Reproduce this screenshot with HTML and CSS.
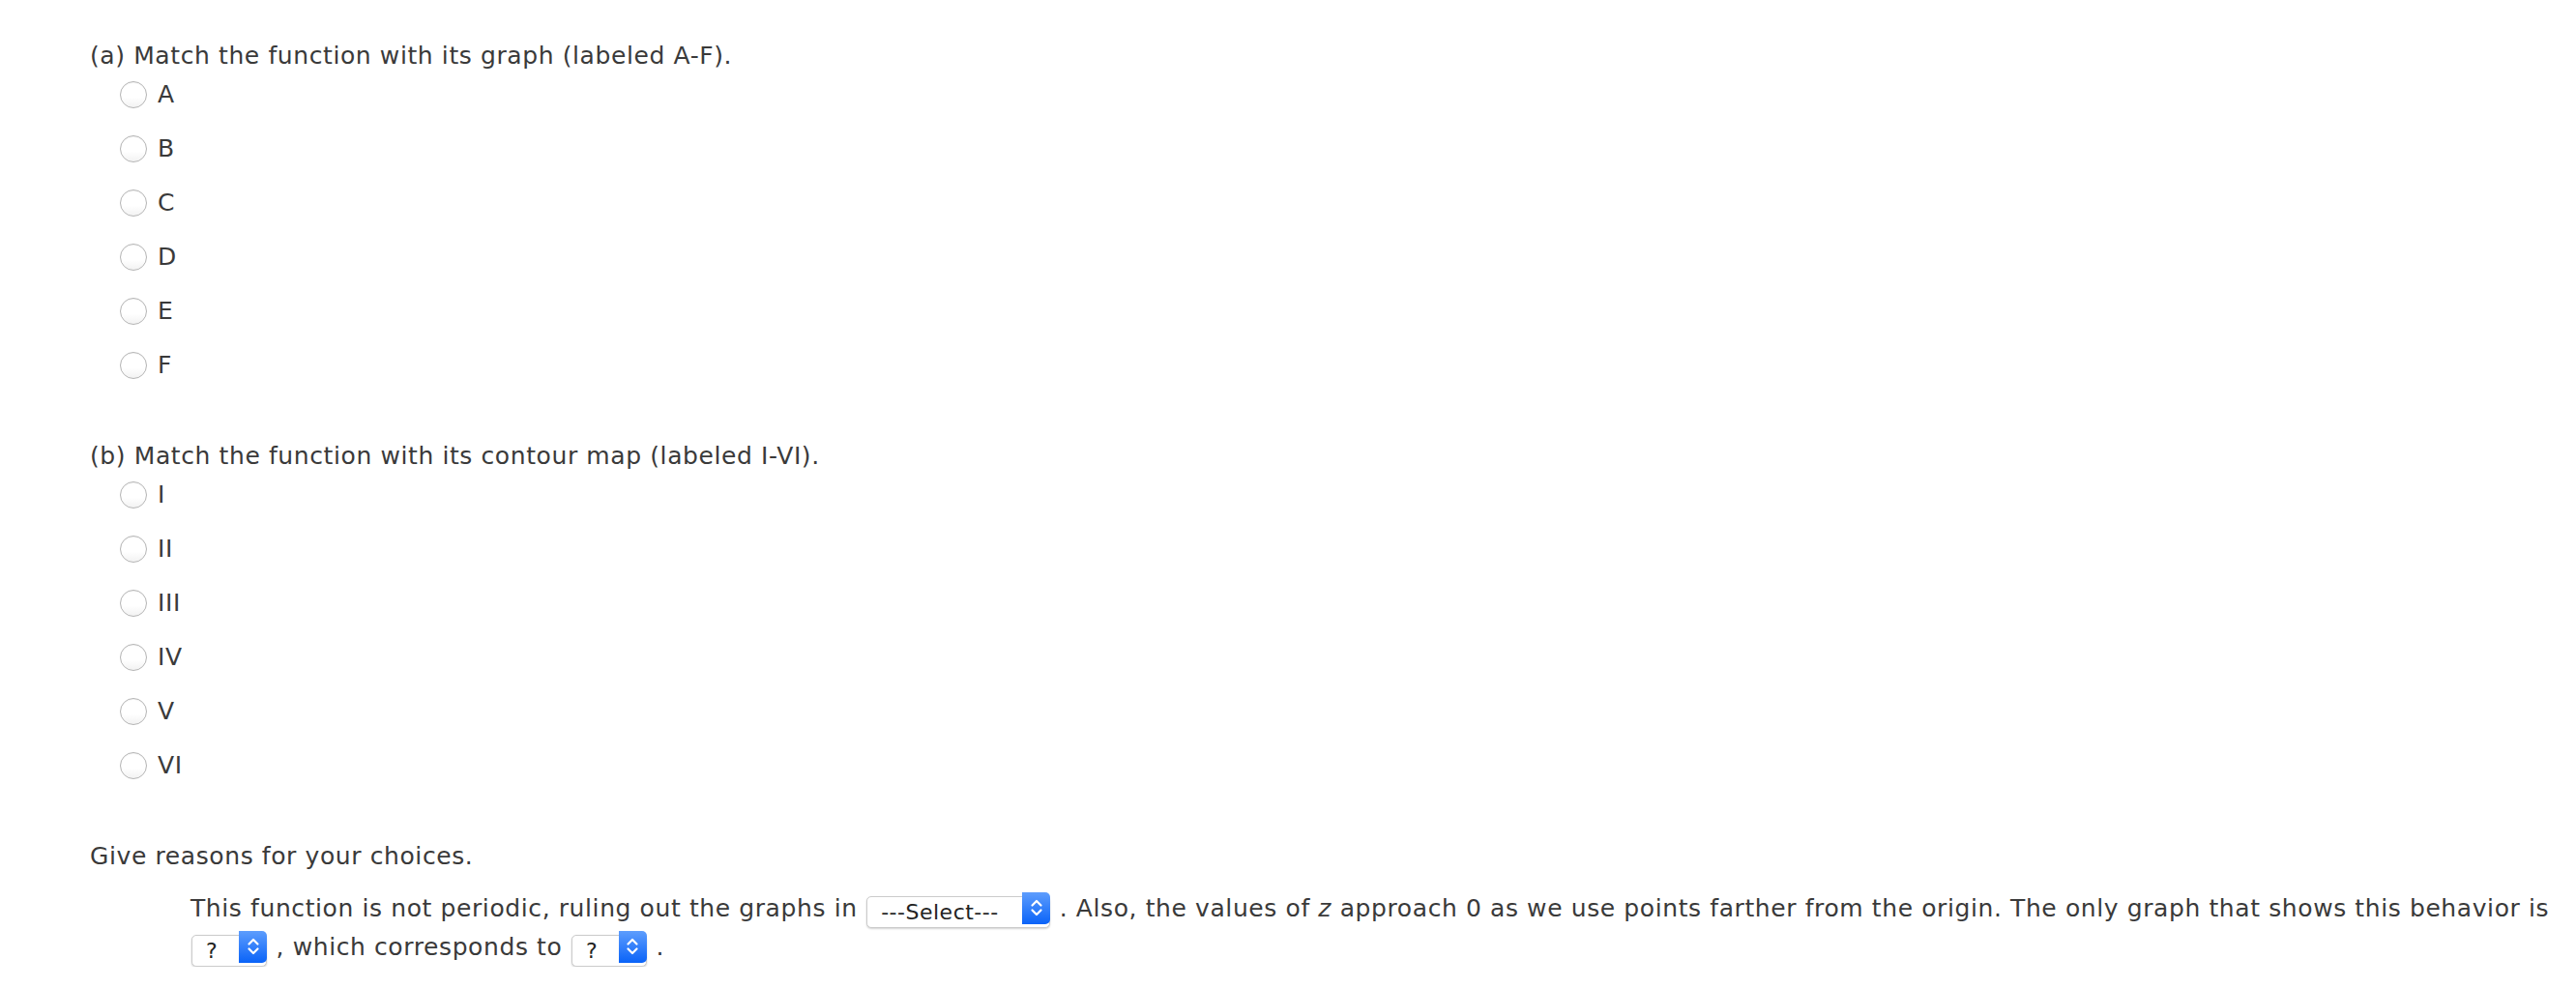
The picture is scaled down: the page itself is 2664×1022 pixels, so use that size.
FILE: index.html
```html
<!DOCTYPE html>
<html lang="en">
<head>
  <meta charset="UTF-8" />
  <title>Question</title>
  <link rel="stylesheet" href="styles.css">
</head>
<body>

  <div class="question">
    <div class="part">
      <p class="part-title">(a) Match the function with its graph (labeled A-F).</p>
      <div class="options">
        <label class="option"><input type="radio" name="graph" value="A" /> A</label>
        <label class="option"><input type="radio" name="graph" value="B" /> B</label>
        <label class="option"><input type="radio" name="graph" value="C" /> C</label>
        <label class="option"><input type="radio" name="graph" value="D" /> D</label>
        <label class="option"><input type="radio" name="graph" value="E" /> E</label>
        <label class="option"><input type="radio" name="graph" value="F" /> F</label>
      </div>
    </div>

    <div class="part">
      <p class="part-title">(b) Match the function with its contour map (labeled I-VI).</p>
      <div class="options">
        <label class="option"><input type="radio" name="contour" value="I" /> I</label>
        <label class="option"><input type="radio" name="contour" value="II" /> II</label>
        <label class="option"><input type="radio" name="contour" value="III" /> III</label>
        <label class="option"><input type="radio" name="contour" value="IV" /> IV</label>
        <label class="option"><input type="radio" name="contour" value="V" /> V</label>
        <label class="option"><input type="radio" name="contour" value="VI" /> VI</label>
      </div>
    </div>

    <div class="reasons">
      <p class="part-title">Give reasons for your choices.</p>
      <p class="reason-text">
        This function is not periodic, ruling out the graphs in
        <span class="dropdown wide">
          <select>
            <option>---Select---</option>
            <option>A and C</option>
            <option>B and D</option>
            <option>E and F</option>
          </select>
          <span class="arrows">
            <svg width="14" height="22" viewBox="0 0 14 22"><path d="M2.5 8.5 L7 4 L11.5 8.5 M2.5 13.5 L7 18 L11.5 13.5" fill="none" stroke="#fff" stroke-width="2.2" stroke-linecap="round" stroke-linejoin="round"/></svg>
          </span>
        </span>
        . Also, the values of <i>z</i> approach 0 as we use points farther from the origin. The only graph that shows this behavior is
        <span class="dropdown">
          <select>
            <option>?</option>
            <option>A</option>
            <option>B</option>
            <option>C</option>
            <option>D</option>
            <option>E</option>
            <option>F</option>
          </select>
          <span class="arrows">
            <svg width="14" height="22" viewBox="0 0 14 22"><path d="M2.5 8.5 L7 4 L11.5 8.5 M2.5 13.5 L7 18 L11.5 13.5" fill="none" stroke="#fff" stroke-width="2.2" stroke-linecap="round" stroke-linejoin="round"/></svg>
          </span>
        </span>
        , which corresponds to
        <span class="dropdown">
          <select>
            <option>?</option>
            <option>I</option>
            <option>II</option>
            <option>III</option>
            <option>IV</option>
            <option>V</option>
            <option>VI</option>
          </select>
          <span class="arrows">
            <svg width="14" height="22" viewBox="0 0 14 22"><path d="M2.5 8.5 L7 4 L11.5 8.5 M2.5 13.5 L7 18 L11.5 13.5" fill="none" stroke="#fff" stroke-width="2.2" stroke-linecap="round" stroke-linejoin="round"/></svg>
          </span>
        </span>
        .
      </p>
    </div>
  </div>

</body>
</html>
```

FILE: styles.css
```css
* {
  box-sizing: border-box;
}

body {
  margin: 0;
  padding: 0;
  background: #fff;
  color: #3a3a3a;
  font-family: "DejaVu Sans", Verdana, sans-serif;
  font-size: 25px;
  letter-spacing: 0.6px;
  line-height: 40px;
}

.question {
  padding: 38px 20px 0 93px;
}

.part {
  margin-bottom: 54px;
}

.part-title {
  margin: 0;
}

.options {
  display: flex;
  flex-direction: column;
  gap: 16px;
  padding-left: 31px;
}

.option {
  display: flex;
  align-items: center;
  gap: 11px;
  height: 40px;
  cursor: pointer;
}

.option input[type="radio"] {
  appearance: none;
  -webkit-appearance: none;
  margin: 0;
  width: 28px;
  height: 28px;
  border-radius: 50%;
  border: 1px solid #b5b5b5;
  background: linear-gradient(#fff 60%, #f2f2f2);
  box-shadow: inset 0 1px 1px rgba(0, 0, 0, 0.05);
}

.reasons .part-title {
  margin-bottom: 14px;
}

.reason-text {
  margin: 0;
  padding-left: 104px;
}

.dropdown {
  position: relative;
  display: inline-block;
  vertical-align: middle;
  width: 78px;
  height: 33px;
  margin: -4px 1px 0;
}

.dropdown.wide {
  width: 190px;
}

.dropdown select {
  appearance: none;
  -webkit-appearance: none;
  width: 100%;
  height: 100%;
  margin: 0;
  padding: 0 0 0 14px;
  border: 1px solid #cbcbcb;
  border-radius: 5px;
  background: #fff;
  box-shadow: 0 1px 2px rgba(0, 0, 0, 0.18);
  font-family: "DejaVu Sans", Verdana, sans-serif;
  font-size: 22px;
  letter-spacing: 0.5px;
  color: #222;
}

.dropdown .arrows {
  position: absolute;
  top: 0;
  right: 0;
  width: 29px;
  height: 33px;
  border-radius: 0 5px 5px 0;
  background: linear-gradient(#5d9dfd, #0a63f8);
  display: flex;
  align-items: center;
  justify-content: center;
  pointer-events: none;
}
```
